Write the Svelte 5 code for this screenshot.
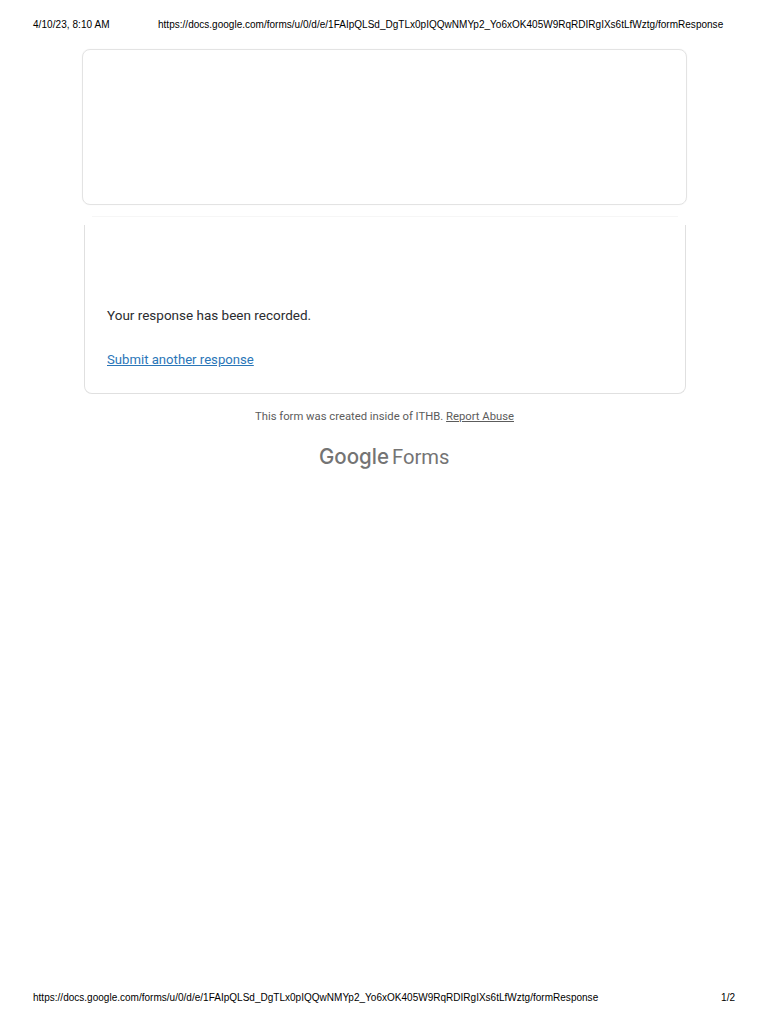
<script>
	const printedAt = '4/10/23, 8:10 AM';
	const pageUrl =
		'https://docs.google.com/forms/u/0/d/e/1FAIpQLSd_DgTLx0pIQQwNMYp2_Yo6xOK405W9RqRDIRgIXs6tLfWztg/formResponse';
	const pageNumber = '1/2';
</script>

<div class="sheet">
	<header class="running header">
		<span class="date">{printedAt}</span>
		<span class="url">{pageUrl}</span>
	</header>

	<main>
		<section class="banner"></section>

		<section class="card">
			<div class="card-top"></div>
			<div class="card-body">
				<p class="message">Your response has been recorded.</p>
				<a class="again" href="#again">Submit another response</a>
			</div>
		</section>

		<p class="disclaimer">
			This form was created inside of ITHB. <a href="#report">Report Abuse</a>
		</p>

		<svg class="logo" width="132" height="30" viewBox="0 0 132 30" role="img" aria-label="Google Forms">
			<text class="google" x="0" y="20.5" textLength="70" lengthAdjust="spacingAndGlyphs">Google</text>
			<text class="forms" x="73" y="20.5" textLength="57.5" lengthAdjust="spacingAndGlyphs">Forms</text>
		</svg>
	</main>

	<footer class="running footer">
		<span class="url">{pageUrl}</span>
		<span>{pageNumber}</span>
	</footer>
</div>

<style>
	:global(body) {
		background: #fff;
	}

	.sheet {
		box-sizing: border-box;
		width: 768px;
		height: 1024px;
		padding: 18px 33px 20px;
		display: flex;
		flex-direction: column;
		font-family: Roboto, sans-serif;
	}

	.running {
		display: flex;
		height: 13px;
		font: 10px/13px 'Liberation Sans', Arial, sans-serif;
		color: #000;
		white-space: nowrap;
	}

	.date {
		width: 125px;
		letter-spacing: 0.06px;
	}

	.url {
		letter-spacing: 0.015px;
	}

	.footer {
		justify-content: space-between;
	}

	main {
		flex: 1;
		display: flex;
		flex-direction: column;
		align-items: center;
		padding-top: 18px;
	}

	.banner {
		box-sizing: border-box;
		width: 605px;
		height: 156px;
		border: 1px solid #e3e3e3;
		border-radius: 8px;
		box-shadow: 0 0 1px #e6e6e6;
	}

	.card {
		width: 602px;
		margin: 11px 0 0 2px;
	}

	.card-top {
		height: 8px;
		margin: 0 8px;
		border-top: 1px solid #f6f6f6;
	}

	.card-body {
		box-sizing: border-box;
		height: 169px;
		padding: 80px 22px 0;
		border: 1px solid #e0e0e0;
		border-top: 0;
		border-radius: 0 0 8px 8px;
	}

	.message {
		margin: 0 0 25px;
		font-size: 13.5px;
		line-height: 20px;
		color: #2b2c2f;
	}

	.again {
		display: block;
		font-size: 13.15px;
		line-height: 20px;
		color: #2a76b8;
	}

	.disclaimer {
		margin: 15px 0 0 1px;
		font-size: 11.28px;
		line-height: 16px;
		color: #5c5c5c;
	}

	.disclaimer a {
		color: inherit;
	}

	.logo {
		margin: 18px 0 0 2px;
		fill: #747474;
	}

	.google {
		font: 500 21.5px Inter, sans-serif;
	}

	.forms {
		font: 400 21px Roboto, sans-serif;
	}
</style>
